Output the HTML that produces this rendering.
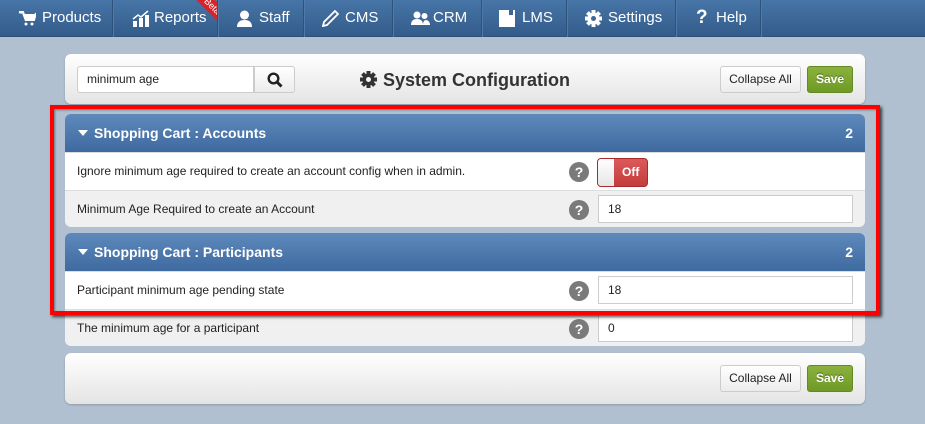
<!DOCTYPE html>
<html><head><meta charset="utf-8"><style>
*{box-sizing:border-box;margin:0;padding:0}
body{width:925px;height:424px;background:#b1c0d0;font-family:"Liberation Sans",Arial,sans-serif;position:relative;overflow:hidden;font-size:12px;color:#222}
.nav{position:absolute;left:0;top:0;width:925px;height:37px;background:linear-gradient(#4775a7,#335c8a);border-bottom:1px solid #2c4f77}
.ni{position:absolute;top:0;height:37px;border-right:1px solid #2d527c;box-shadow:1px 0 0 #4d7aab;color:#fff;font-size:15px;line-height:36px;white-space:nowrap}
.ni svg{position:absolute;top:10px}
.ni span{position:absolute}
.panel{position:absolute;left:65px;width:800px;background:linear-gradient(#fff,#e4e4e4);border-radius:6px;box-shadow:0 1px 2px rgba(0,0,0,.2)}
.btn{position:absolute;height:27px;border:1px solid #ccc;border-radius:3px;background:linear-gradient(#fff,#ececec);font-size:12px;line-height:25px;text-align:center}
.save{background:linear-gradient(#8bb13e,#6f9a26);border-color:#628a22;color:#fff;font-weight:bold;text-shadow:0 -1px 0 #4a6a18}
.hdr{position:absolute;left:65px;width:800px;height:38px;background:linear-gradient(#5e89bb,#3f6aa0);border-radius:6px 6px 0 0;color:#fff;font-weight:bold;font-size:14px;line-height:38px}
.hdr .t{position:absolute;left:29px}
.hdr .c{position:absolute;right:12px}
.hdr .tri{position:absolute;left:13px;top:16px;width:0;height:0;border-left:5px solid transparent;border-right:5px solid transparent;border-top:6px solid #fff}
.row{position:absolute;left:65px;width:800px;height:38px;border-top:1px solid #dcdcdc;line-height:37px;font-size:12px;padding-left:12px}
.q{position:absolute;left:504px;top:9px;width:20px;height:20px;border-radius:50%;background:#7a7a7a;color:#fff;font-weight:bold;font-size:14px;line-height:20px;text-align:center}
.inp{position:absolute;left:533px;top:4px;width:255px;height:28px;border:1px solid #ccc;background:#fff;padding-left:9px;line-height:26px}
</style></head><body>
<div class="nav">
 <div class="ni" style="left:0;width:113px"><svg style="left:18px" width="18" height="16" viewBox="0 0 18 16"><path d="M0 3h4l3 8h8l2-7H5" fill="#fff"/><path d="M1 2h4l3 8h8l2-7" fill="none" stroke="#fff" stroke-width="2"/><circle cx="8" cy="14" r="1.5" fill="#fff"/><circle cx="14" cy="14" r="1.5" fill="#fff"/></svg><span style="left:42px">Products</span></div>
 <div class="ni" style="left:113px;width:105px;overflow:hidden"><svg style="left:19px" width="18" height="17" viewBox="0 0 18 17"><rect x="1" y="11" width="4" height="6" fill="#fff"/><rect x="7" y="8" width="4" height="9" fill="#fff"/><rect x="13" y="5" width="4" height="12" fill="#fff"/><path d="M1 9l5-4 3 2 7-6" stroke="#fff" stroke-width="1.5" fill="none"/></svg><span style="left:41px">Reports</span>
  <div style="position:absolute;left:77px;top:0px;width:44px;height:13px;background:#d8232a;color:#fff;font-size:9px;line-height:13px;text-align:center;transform:rotate(45deg)">Beta</div></div>
 <div class="ni" style="left:218px;width:86px"><svg style="left:18px" width="17" height="17" viewBox="0 0 17 17"><circle cx="8.5" cy="5" r="4.5" fill="#fff"/><path d="M1 17c0-5 3-7 7.5-7s7.5 2 7.5 7z" fill="#fff"/></svg><span style="left:41px">Staff</span></div>
 <div class="ni" style="left:304px;width:89px"><svg style="left:18px" width="17" height="17" viewBox="0 0 17 17"><path d="M1 16l1-4L13 1l3 3L5 15z" fill="none" stroke="#fff" stroke-width="1.8"/></svg><span style="left:41px">CMS</span></div>
 <div class="ni" style="left:393px;width:89px"><svg style="left:18px" width="19" height="16" viewBox="0 0 19 16"><circle cx="6" cy="5" r="3.5" fill="#fff"/><path d="M0 15c0-4 2-6 6-6s6 2 6 6z" fill="#fff"/><circle cx="13.5" cy="6" r="3" fill="#fff"/><path d="M12 15c0-3 1-5 3-5s4 2 4 5z" fill="#fff"/></svg><span style="left:40px">CRM</span></div>
 <div class="ni" style="left:482px;width:85px"><svg style="left:17px" width="16" height="17" viewBox="0 0 16 17"><rect x="0" y="0" width="16" height="17" fill="#fff"/><rect x="10" y="0" width="4" height="5" fill="#3d6798"/></svg><span style="left:40px">LMS</span></div>
 <div class="ni" style="left:567px;width:109px"><svg style="left:18px" width="17" height="17" viewBox="0 0 17 17"><g fill="#fff"><circle cx="8.5" cy="8.5" r="6"/><rect x="6.5" y="0" width="4" height="17"/><rect x="0" y="6.5" width="17" height="4"/><rect x="6.5" y="0" width="4" height="17" transform="rotate(45 8.5 8.5)"/><rect x="6.5" y="0" width="4" height="17" transform="rotate(-45 8.5 8.5)"/></g><circle cx="8.5" cy="8.5" r="2.5" fill="#3d6798"/></svg><span style="left:41px">Settings</span></div>
 <div class="ni" style="left:676px;width:85px"><span style="left:20px;font-weight:bold;font-size:19px">?</span><span style="left:40px">Help</span></div>
</div>

<div class="panel" style="top:54px;height:50px">
 <div style="position:absolute;left:12px;top:12px;width:177px;height:27px;border:1px solid #ccc;border-radius:3px 0 0 3px;background:#fff;padding-left:9px;line-height:25px">minimum age</div>
 <div class="btn" style="left:189px;top:12px;width:41px;border-radius:0 3px 3px 0"><svg width="16" height="16" viewBox="0 0 16 16" style="margin-top:5px"><circle cx="6.5" cy="6.5" r="4.8" fill="none" stroke="#222" stroke-width="2.4"/><path d="M10 10l4.5 4.5" stroke="#222" stroke-width="3"/></svg></div>
 <div style="position:absolute;left:295px;top:13px;font-size:18px;font-weight:bold;color:#333;line-height:26px"><svg width="17" height="17" viewBox="0 0 17 17" style="vertical-align:-2px;margin-right:6px"><g fill="#333"><circle cx="8.5" cy="8.5" r="6"/><rect x="6.5" y="0" width="4" height="17"/><rect x="0" y="6.5" width="17" height="4"/><rect x="6.5" y="0" width="4" height="17" transform="rotate(45 8.5 8.5)"/><rect x="6.5" y="0" width="4" height="17" transform="rotate(-45 8.5 8.5)"/></g><circle cx="8.5" cy="8.5" r="2.5" fill="#f4f4f4"/></svg>System Configuration</div>
 <div class="btn" style="left:655px;top:12px;width:81px">Collapse All</div>
 <div class="btn save" style="left:742px;top:12px;width:46px">Save</div>
</div>

<div class="hdr" style="top:114px"><div class="tri"></div><span class="t">Shopping Cart : Accounts</span><span class="c">2</span></div>
<div class="row" style="top:152px;background:#fff">Ignore minimum age required to create an account config when in admin.<div class="q">?</div>
 <div style="position:absolute;left:532px;top:5px;width:51px;height:29px;border:1px solid #a92a2a;border-radius:4px;background:linear-gradient(#dc5a5a,#c43c3c);overflow:hidden"><div style="position:absolute;left:0;top:0;width:16px;height:27px;background:linear-gradient(#fff,#e6e6e6)"></div><span style="position:absolute;left:24px;top:-5px;color:#fff;font-weight:bold;font-size:12px">Off</span></div></div>
<div class="row" style="top:190px;height:37px;background:#f0f0f0;border-radius:0 0 6px 6px">Minimum Age Required to create an Account<div class="q">?</div><div class="inp">18</div></div>

<div class="hdr" style="top:233px"><div class="tri"></div><span class="t">Shopping Cart : Participants</span><span class="c">2</span></div>
<div class="row" style="top:271px;background:#fff">Participant minimum age pending state<div class="q">?</div><div class="inp">18</div></div>
<div class="row" style="top:309px;height:37px;background:#f0f0f0;border-radius:0 0 6px 6px">The minimum age for a participant<div class="q">?</div><div class="inp">0</div></div>

<div class="panel" style="top:353px;height:51px">
 <div class="btn" style="left:655px;top:12px;width:81px">Collapse All</div>
 <div class="btn save" style="left:742px;top:12px;width:46px">Save</div>
</div>

<div style="position:absolute;left:50px;top:105px;width:830px;height:210px;border:4px solid #f00;box-shadow:2px 2px 3px rgba(0,0,0,.7),inset 1px 1px 2px rgba(0,0,0,.4)"></div>
</body></html>
